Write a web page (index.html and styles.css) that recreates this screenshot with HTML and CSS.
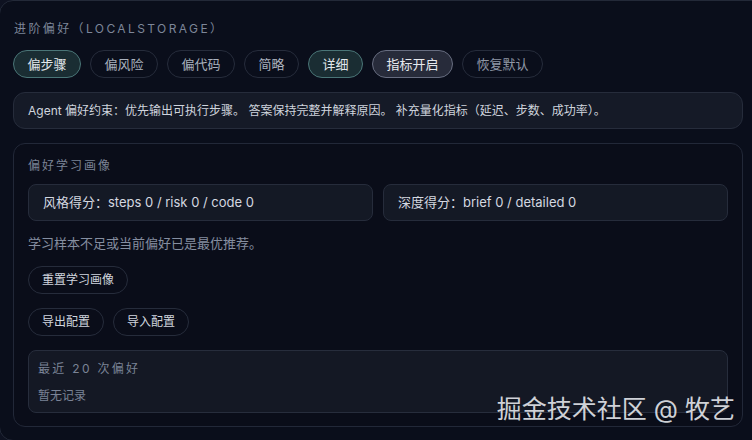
FILE: index.html
```html
<!DOCTYPE html>
<html lang="zh-CN">
<head>
<meta charset="utf-8">
<title>进阶偏好</title>
<link rel="stylesheet" href="styles.css">
</head>
<body>
<div class="panel">
  <div class="section-title">进阶偏好（LOCALSTORAGE）</div>
  <div class="chips">
    <button class="chip chip-on">偏步骤</button>
    <button class="chip">偏风险</button>
    <button class="chip">偏代码</button>
    <button class="chip">简略</button>
    <button class="chip chip-on">详细</button>
    <button class="chip chip-gray">指标开启</button>
    <button class="chip chip-muted">恢复默认</button>
  </div>
  <div class="constraint">Agent 偏好约束：优先输出可执行步骤。 答案保持完整并解释原因。 补充量化指标（延迟、步数、成功率）。</div>
  <div class="profile">
    <div class="sub-title">偏好学习画像</div>
    <div class="scores">
      <div class="score">风格得分：steps 0 / risk 0 / code 0</div>
      <div class="score">深度得分：brief 0 / detailed 0</div>
    </div>
    <div class="note">学习样本不足或当前偏好已是最优推荐。</div>
    <div class="btn-row">
      <button class="btn">重置学习画像</button>
    </div>
    <div class="btn-row">
      <button class="btn">导出配置</button>
      <button class="btn">导入配置</button>
    </div>
    <div class="recent">
      <div class="recent-title">最近 20 次偏好</div>
      <div class="recent-empty">暂无记录</div>
    </div>
  </div>
</div>
<div class="watermark">掘金技术社区 @ 牧艺</div>
</body>
</html>
```

FILE: styles.css
```css
html, body {
  margin: 0;
  padding: 0;
}
body {
  width: 752px;
  height: 440px;
  overflow: hidden;
  background: #0e1221;
  font-family: "Inter", "Noto Sans CJK SC", sans-serif;
  color: #d0d5de;
  position: relative;
}
.panel {
  margin-left: -1px;
  width: 780px;
  box-sizing: border-box;
  border: 1px solid #232938;
  border-radius: 14px;
  background: #0a0e1b;
  padding: 20px 0 13px 13px;
}
.section-title {
  font-size: 12px;
  line-height: 16px;
  letter-spacing: 2.4px;
  color: #7d8699;
  margin-left: 1px;
}
.chips {
  display: flex;
  gap: 9px;
  margin-top: 13px;
}
.chip {
  height: 28px;
  padding: 0 13.5px;
  border-radius: 14px;
  border: 1px solid #262c3b;
  background: transparent;
  color: #aab2be;
  font-family: inherit;
  font-size: 13px;
  line-height: 26px;
}
.chip-on {
  background: #1a2d33;
  border-color: #4a7577;
  color: #e2e8ec;
}
.chip-gray {
  background: #272b3a;
  border-color: #676d80;
  color: #e6e9ee;
}
.chip-muted {
  color: #8f97a6;
}
.constraint {
  width: 730px;
  box-sizing: border-box;
  margin-top: 14px;
  height: 37px;
  padding: 0 14px;
  border: 1px solid #262c3b;
  border-radius: 12px;
  background: #151a27;
  font-size: 12px;
  line-height: 35px;
  color: #cfd4dd;
  white-space: nowrap;
}
.profile {
  width: 730px;
  box-sizing: border-box;
  margin-top: 14px;
  border: 1px solid #222838;
  border-radius: 12px;
  background: #0a0d19;
  padding: 14px 14px 13px 14px;
}
.sub-title {
  font-size: 12px;
  line-height: 16px;
  letter-spacing: 2px;
  color: #7a8396;
}
.scores {
  display: grid;
  grid-template-columns: 1fr 1fr;
  gap: 10px;
  margin-top: 10px;
}
.score {
  height: 37px;
  box-sizing: border-box;
  padding: 0 14px;
  border: 1px solid #262c3b;
  border-radius: 8px;
  background: #141925;
  font-size: 13px;
  line-height: 35px;
  color: #d4d8e0;
}
.note {
  margin-top: 13px;
  font-size: 13px;
  line-height: 18px;
  color: #858ea0;
}
.btn-row {
  display: flex;
  gap: 9px;
  margin-top: 14px;
}
.btn {
  height: 28px;
  padding: 0 13px;
  border-radius: 14px;
  border: 1px solid #262c3b;
  background: transparent;
  color: #d0d5de;
  font-family: inherit;
  font-size: 12px;
  line-height: 26px;
}
.recent {
  margin-top: 14px;
  height: 63px;
  box-sizing: border-box;
  border: 1px solid #272d3c;
  border-radius: 8px;
  background: #141824;
  padding: 10px 9px 0 9px;
}
.recent-title {
  font-size: 12px;
  line-height: 16px;
  letter-spacing: 2.3px;
  color: #7a8396;
}
.recent-empty {
  margin-top: 11px;
  font-size: 12px;
  line-height: 16px;
  color: #7a8396;
}
.watermark {
  position: absolute;
  right: 17px;
  top: 394px;
  font-size: 25px;
  line-height: 30px;
  color: rgba(235, 237, 242, 0.88);
  white-space: nowrap;
}
```
